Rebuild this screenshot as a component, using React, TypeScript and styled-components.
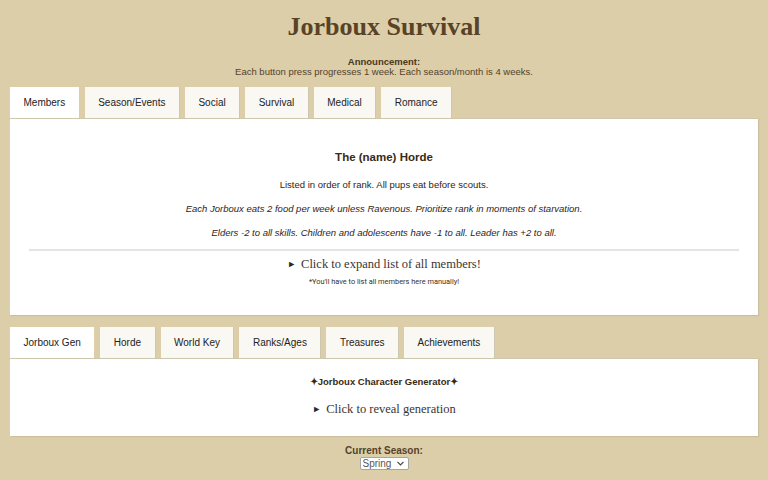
import { useState } from "react";
import styled, { createGlobalStyle } from "styled-components";

const GlobalStyle = createGlobalStyle`
    html, body {
        margin: 0;
        padding: 0;
        background: #dbcea9;
    }
    body {
        font-family: "Liberation Sans", Arial, sans-serif;
        color: #2a2014;
    }
`;

const Page = styled.div`
    padding: 10px 10px 0;
`;

const Title = styled.h1`
    margin: 0;
    text-align: center;
    font-family: "Liberation Serif", "Times New Roman", serif;
    font-weight: 700;
    font-size: 26px;
    line-height: 34px;
    color: #5a4226;
`;

const Announcement = styled.div`
    margin-top: 13px;
    text-align: center;
    font-size: 9.5px;
    line-height: 10px;
    color: #55422a;
    strong {
        display: block;
        color: #4a3820;
    }
`;

const TabBar = styled.div<{ $top: number }>`
    display: flex;
    gap: 6px;
    margin-top: ${(props) => props.$top}px;
`;

const Tab = styled.button<{ $active: boolean }>`
    height: 31px;
    padding: 0 13.5px;
    border: none;
    font-family: "Liberation Sans", Arial, sans-serif;
    font-size: 10px;
    color: #222;
    cursor: pointer;
    background: ${(props) => (props.$active ? "#ffffff" : "#faf8f3")};
    box-shadow: ${(props) =>
        props.$active ? "none" : "1px 0 0 #cfc6b2, 0 1px 0 #c9c0ab"};
    position: relative;
    z-index: ${(props) => (props.$active ? 2 : 0)};
`;

const Panel = styled.section<{ $padTop: number; $padBottom: number }>`
    position: relative;
    z-index: 1;
    background: #ffffff;
    border-top: 1px solid #cfc6ae;
    box-shadow: 1px 1px 1px #cbbf9f;
    padding: ${(props) => props.$padTop}px 19px ${(props) => props.$padBottom}px;
    text-align: center;
`;

const Heading = styled.h2`
    margin: 0;
    font-size: 11.5px;
    line-height: 14px;
    font-weight: 700;
    color: #3a2a14;
`;

const Line = styled.p<{ $italic?: boolean }>`
    margin: 12px 0 0;
    font-size: 9.5px;
    line-height: 12px;
    color: #2e2418;
    font-style: ${(props) => (props.$italic ? "italic" : "normal")};
    &:first-of-type {
        margin-top: 15px;
    }
`;

const Rule = styled.hr`
    margin: 10px 0 0;
    border: none;
    height: 2px;
    background: #e6e4e0;
`;

const Reveal = styled.details<{ $top: number }>`
    margin-top: ${(props) => props.$top}px;
    summary {
        font-family: "Liberation Serif", "Times New Roman", serif;
        font-size: 12.5px;
        line-height: 16px;
        color: #3b3530;
        cursor: pointer;
        list-style: none;
    }
    summary::-webkit-details-marker {
        display: none;
    }
    summary::before {
        content: "►";
        font-size: 9px;
        color: #2a2a2a;
        margin-right: 5px;
        vertical-align: 1px;
    }
`;

const Note = styled.p`
    margin: 5px 0 0;
    font-family: "Roboto", "Liberation Sans", sans-serif;
    font-size: 7.4px;
    line-height: 9px;
    color: #3a2f24;
`;

const GenTitle = styled.h3`
    margin: 0;
    font-size: 9.5px;
    line-height: 12px;
    font-weight: 700;
    color: #3a2a14;
`;

const Footer = styled.div`
    margin-top: 9px;
    display: flex;
    flex-direction: column;
    align-items: center;
    font-size: 10px;
    line-height: 12px;
    font-weight: 700;
    color: #55422a;
`;

const SelectBox = styled.div`
    position: relative;
    width: 49px;
    height: 13px;
`;

const SeasonSelect = styled.select`
    appearance: none;
    width: 100%;
    height: 100%;
    margin: 0;
    padding: 0 0 0 2px;
    font-family: "Liberation Sans", Arial, sans-serif;
    font-size: 10px;
    line-height: 11px;
    color: #555;
    background: #fff;
    border: 1px solid #a5a5a5;
    border-radius: 2px;
`;

const Chevron = styled.svg`
    position: absolute;
    right: 5px;
    top: 4px;
    pointer-events: none;
`;

const topTabs = ["Members", "Season/Events", "Social", "Survival", "Medical", "Romance"];
const bottomTabs = ["Jorboux Gen", "Horde", "World Key", "Ranks/Ages", "Treasures", "Achievements"];

function App() {
    const [topTab, setTopTab] = useState("Members");
    const [bottomTab, setBottomTab] = useState("Jorboux Gen");
    const [season, setSeason] = useState("Spring");

    return (
        <Page>
            <GlobalStyle />
            <Title>Jorboux Survival</Title>
            <Announcement>
                <strong>Announcement:</strong>
                Each button press progresses 1 week. Each season/month is 4 weeks.
            </Announcement>

            <TabBar $top={10}>
                {topTabs.map((name) => (
                    <Tab key={name} $active={topTab === name} onClick={() => setTopTab(name)}>
                        {name}
                    </Tab>
                ))}
            </TabBar>
            <Panel $padTop={31} $padBottom={29}>
                <Heading>The (name) Horde</Heading>
                <Line>Listed in order of rank. All pups eat before scouts.</Line>
                <Line $italic>
                    Each Jorboux eats 2 food per week unless Ravenous. Prioritize rank in moments of starvation.
                </Line>
                <Line $italic>
                    Elders -2 to all skills. Children and adolescents have -1 to all. Leader has +2 to all.
                </Line>
                <Rule />
                <Reveal $top={5}>
                    <summary>Click to expand list of all members!</summary>
                </Reveal>
                <Note>*You'll have to list all members here manually!</Note>
            </Panel>

            <TabBar $top={12}>
                {bottomTabs.map((name) => (
                    <Tab key={name} $active={bottomTab === name} onClick={() => setBottomTab(name)}>
                        {name}
                    </Tab>
                ))}
            </TabBar>
            <Panel $padTop={17} $padBottom={19}>
                <GenTitle>✦Jorboux Character Generator✦</GenTitle>
                <Reveal $top={13}>
                    <summary>Click to reveal generation</summary>
                </Reveal>
            </Panel>

            <Footer>
                Current Season:
                <SelectBox>
                    <SeasonSelect value={season} onChange={(e) => setSeason(e.target.value)}>
                        <option>Spring</option>
                        <option>Summer</option>
                        <option>Autumn</option>
                        <option>Winter</option>
                    </SeasonSelect>
                    <Chevron width="7" height="5" viewBox="0 0 7 5">
                        <path d="M0.5 0.8 L3.5 3.8 L6.5 0.8" fill="none" stroke="#444" strokeWidth="1.2" />
                    </Chevron>
                </SelectBox>
            </Footer>
        </Page>
    );
}

export default App;
